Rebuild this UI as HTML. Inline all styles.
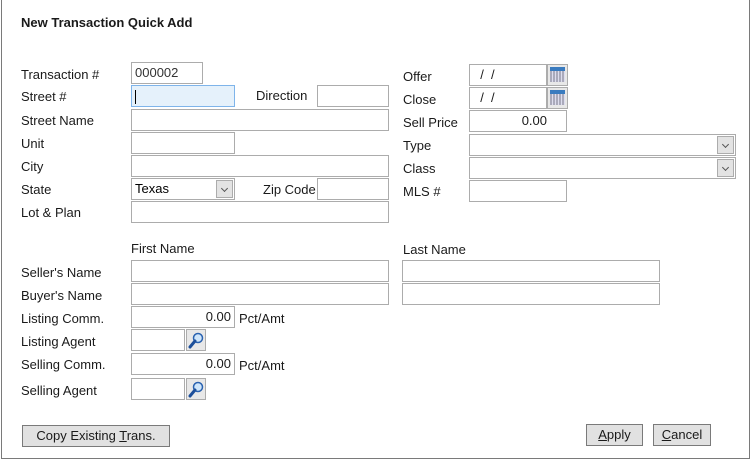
<!DOCTYPE html>
<html><head><style>
*{box-sizing:border-box;margin:0;padding:0}
body{width:752px;height:460px;background:#fff;font-family:"Liberation Sans",sans-serif;font-size:13px;color:#1a1a1a;position:relative;overflow:hidden}
.frame{position:absolute;left:1px;top:-1px;width:749px;height:460px;border:1px solid #7a7a7a;border-top:none}
.t{position:absolute;white-space:nowrap;line-height:14px}
.b{position:absolute;border:1px solid #acacac;background:#fff;height:22px;line-height:20px;padding:0 3px}
.r{text-align:right}
.dd{position:absolute;right:1px;top:1px;width:17px;height:18px;background:#e3e3e3;border:1px solid #acacac}
.dd:after{content:"";position:absolute;left:5px;top:5px;width:4px;height:4px;border-right:1px solid #555;border-bottom:1px solid #555;transform:rotate(45deg)}
.btn{position:absolute;background:#e1e1e1;border:1px solid #7a7a7a;height:22px;line-height:20px;text-align:center}
.cal{position:absolute;width:21px;height:22px;border:1px solid #acacac;background:#e8e8e8}
.cal:before{content:"";position:absolute;left:2px;top:2px;width:15px;height:4px;background:#3a7bbf}
.cal:after{content:"";position:absolute;left:2px;top:6px;width:15px;height:11px;background:repeating-linear-gradient(90deg,#aab 0 2px,#dde 2px 3px)}
.srch{position:absolute;width:20px;height:22px;border:1px solid #acacac;background:#e8e8e8}
</style></head><body>
<div class="frame"></div>
<div class="t" style="left:21px;top:16px;font-weight:bold">New Transaction Quick Add</div>

<div class="t" style="left:21px;top:68px">Transaction #</div>
<div class="b" style="left:131px;top:62px;width:72px;color:#333">000002</div>
<div class="t" style="left:21px;top:90px">Street #</div>
<div class="b" style="left:131px;top:85px;width:104px;background:#e5f1fb;border-color:#7eb4ea"><span style="display:inline-block;width:1px;height:14px;background:#000;vertical-align:middle"></span></div>
<div class="t" style="left:256px;top:89px">Direction</div>
<div class="b" style="left:317px;top:85px;width:72px"></div>
<div class="t" style="left:21px;top:114px">Street Name</div>
<div class="b" style="left:131px;top:109px;width:258px"></div>
<div class="t" style="left:21px;top:137px">Unit</div>
<div class="b" style="left:131px;top:132px;width:104px"></div>
<div class="t" style="left:21px;top:160px">City</div>
<div class="b" style="left:131px;top:155px;width:258px"></div>
<div class="t" style="left:21px;top:183px">State</div>
<div class="b" style="left:131px;top:178px;width:104px;color:#000">Texas<div class="dd"></div></div>
<div class="t" style="left:263px;top:183px">Zip Code</div>
<div class="b" style="left:317px;top:178px;width:72px"></div>
<div class="t" style="left:21px;top:206px">Lot &amp; Plan</div>
<div class="b" style="left:131px;top:201px;width:258px"></div>

<div class="t" style="left:403px;top:70px">Offer</div>
<div class="b" style="left:469px;top:64px;width:78px">&nbsp;&nbsp;/&nbsp;&nbsp;/</div>
<div class="cal" style="left:547px;top:64px"></div>
<div class="t" style="left:403px;top:93px">Close</div>
<div class="b" style="left:469px;top:87px;width:78px">&nbsp;&nbsp;/&nbsp;&nbsp;/</div>
<div class="cal" style="left:547px;top:87px"></div>
<div class="t" style="left:403px;top:116px">Sell Price</div>
<div class="b" style="left:469px;top:110px;width:98px;text-align:right;padding-right:19px">0.00</div>
<div class="t" style="left:403px;top:139px">Type</div>
<div class="b" style="left:469px;top:134px;width:267px"><div class="dd"></div></div>
<div class="t" style="left:403px;top:162px">Class</div>
<div class="b" style="left:469px;top:157px;width:267px"><div class="dd"></div></div>
<div class="t" style="left:403px;top:185px">MLS #</div>
<div class="b" style="left:469px;top:180px;width:98px"></div>

<div class="t" style="left:131px;top:242px">First Name</div>
<div class="t" style="left:403px;top:243px">Last Name</div>
<div class="t" style="left:21px;top:266px">Seller's Name</div>
<div class="b" style="left:131px;top:260px;width:258px"></div>
<div class="b" style="left:402px;top:260px;width:258px"></div>
<div class="t" style="left:21px;top:289px">Buyer's Name</div>
<div class="b" style="left:131px;top:283px;width:258px"></div>
<div class="b" style="left:402px;top:283px;width:258px"></div>
<div class="t" style="left:21px;top:312px">Listing Comm.</div>
<div class="b r" style="left:131px;top:306px;width:104px">0.00</div>
<div class="t" style="left:239px;top:312px">Pct/Amt</div>
<div class="t" style="left:21px;top:335px">Listing Agent</div>
<div class="b" style="left:131px;top:329px;width:54px"></div>
<div class="srch" style="left:186px;top:329px"><svg width="18" height="20" viewBox="0 0 18 20"><circle cx="11" cy="8" r="4.5" fill="#cfe6fb" stroke="#2a62b0" stroke-width="1.5"/><path d="M8 11 L3 17" stroke="#1d4f9a" stroke-width="3" stroke-linecap="round"/></svg></div>
<div class="t" style="left:21px;top:358px">Selling Comm.</div>
<div class="b r" style="left:131px;top:353px;width:104px">0.00</div>
<div class="t" style="left:239px;top:359px">Pct/Amt</div>
<div class="t" style="left:21px;top:384px">Selling Agent</div>
<div class="b" style="left:131px;top:378px;width:54px"></div>
<div class="srch" style="left:186px;top:378px"><svg width="18" height="20" viewBox="0 0 18 20"><circle cx="11" cy="8" r="4.5" fill="#cfe6fb" stroke="#2a62b0" stroke-width="1.5"/><path d="M8 11 L3 17" stroke="#1d4f9a" stroke-width="3" stroke-linecap="round"/></svg></div>

<div class="btn" style="left:22px;top:425px;width:148px">Copy Existing <u>T</u>rans.</div>
<div class="btn" style="left:586px;top:424px;width:57px"><u>A</u>pply</div>
<div class="btn" style="left:653px;top:424px;width:58px"><u>C</u>ancel</div>
</body></html>
